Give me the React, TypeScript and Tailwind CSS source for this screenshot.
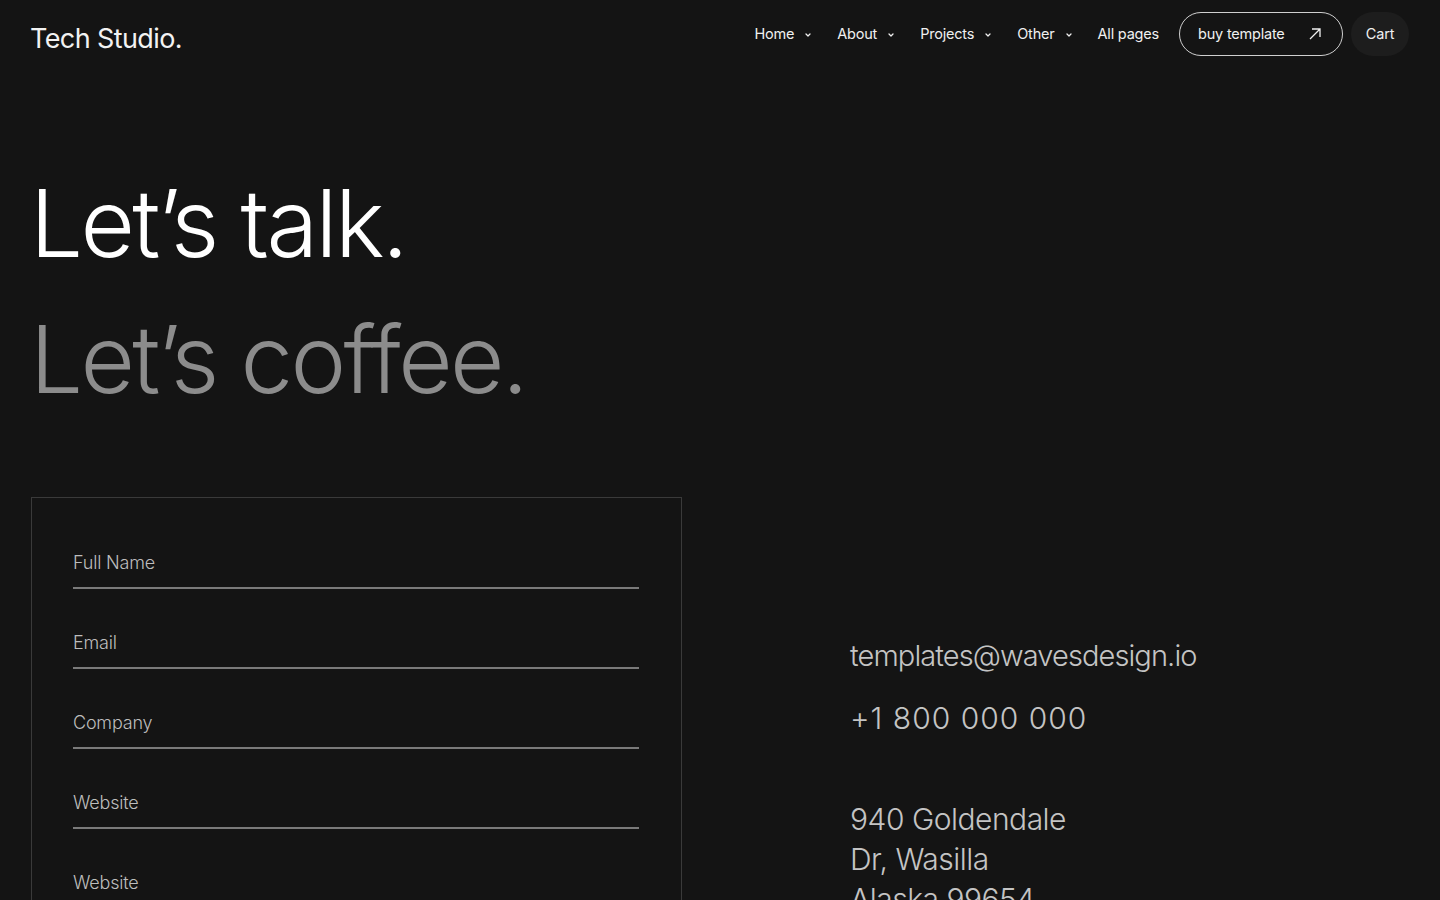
import React from "react";

const Chevron = () => (
  <svg width="8" height="8" viewBox="0 0 10 10" className="ml-[10px] mt-[1px]" fill="none">
    <path d="M2.5 3.8 L5 6.2 L7.5 3.8" stroke="currentColor" strokeWidth="1.6" strokeLinecap="round" strokeLinejoin="round" />
  </svg>
);

const Arrow = () => (
  <svg width="14" height="14" viewBox="0 0 14 14" fill="none">
    <path d="M2 12 L12 2 M4 2 H12 V10" stroke="currentColor" strokeWidth="1.3" />
  </svg>
);

const Field = ({ label }: { label: string }) => (
  <div className="flex flex-col h-[80px] justify-end">
    <div className="text-[18px] text-[#bdbdbd] font-light leading-none pb-[15px] tracking-[-0.2px]">{label}</div>
    <div className="h-[2px] bg-[#7a7a7a]" />
  </div>
);

export default function App() {
  return (
    <div
      className="w-full min-h-[900px] h-[900px] overflow-hidden bg-[#141414] text-white"
      style={{ fontFamily: "Inter, 'Noto Sans', sans-serif" }}
    >
      <header className="flex items-center justify-between h-[44px] box-content pl-[30px] pr-[31px] pt-[12px]">
        <div className="text-[27px] leading-none tracking-[-0.6px] font-normal text-[#f2f2f2] mt-[8px]">Tech Studio.</div>
        <nav className="flex items-center text-[14.5px] tracking-[-0.2px] text-[#f0f0f0]">
          <div className="flex items-center mr-[25px]">Home<Chevron /></div>
          <div className="flex items-center mr-[25px]">About<Chevron /></div>
          <div className="flex items-center mr-[25px]">Projects<Chevron /></div>
          <div className="flex items-center mr-[25px]">Other<Chevron /></div>
          <div className="mr-[20px]">All pages</div>
          <div className="flex items-center justify-between w-[164px] h-[44px] rounded-full border border-[#cfcfcf] pl-[18px] pr-[20px]">
            <span>buy template</span>
            <Arrow />
          </div>
          <div className="ml-[8px] h-[44px] w-[58px] rounded-full bg-[#1d1d1d] flex items-center justify-center">Cart</div>
        </nav>
      </header>

      <section className="pl-[30px] mt-[99px]">
        <h1 className="text-[94px] leading-[136px] font-light tracking-[-2.6px] text-white">Let’s talk.</h1>
        <h2 className="text-[94px] leading-[136px] font-light tracking-[-2.6px] text-[#8c8c8c]">Let’s coffee.</h2>
      </section>

      <section className="flex mt-[70px] pl-[31px]">
        <div className="w-[651px] border border-[#3a3a3a] pl-[41px] pr-[42px] pt-[11px] pb-[40px] flex flex-col">
          <Field label="Full Name" />
          <Field label="Email" />
          <Field label="Company" />
          <Field label="Website" />
          <Field label="Website" />
        </div>
        <div className="ml-[168px] pt-[139px] text-[#c4c4c4] font-light">
          <div className="text-[29px] leading-[40px] tracking-[-0.9px]">templates@wavesdesign.io</div>
          <div className="text-[30px] leading-[40px] tracking-[1px] mt-[22px]">+1 800 000 000</div>
          <div className="text-[30px] leading-[40px] tracking-[-0.5px] mt-[61px]">
            940 Goldendale
            <br />
            Dr, Wasilla
            <br />
            Alaska 99654
          </div>
        </div>
      </section>
    </div>
  );
}
